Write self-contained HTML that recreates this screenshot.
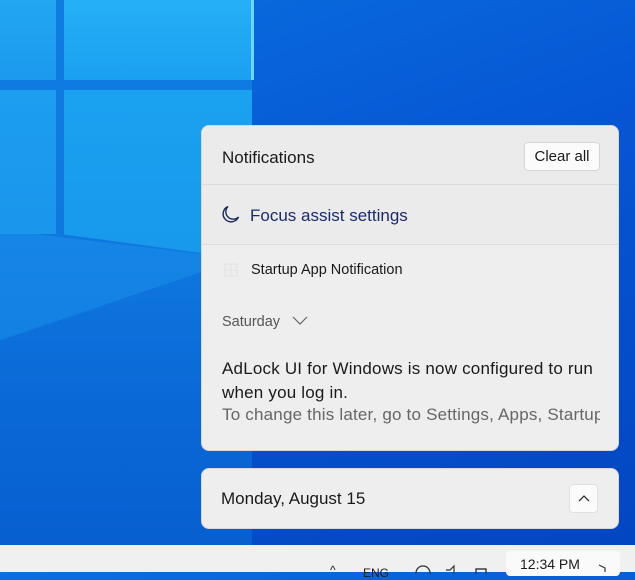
<!DOCTYPE html>
<html><head><style>
*{margin:0;padding:0;box-sizing:border-box}
body{width:635px;height:572px;overflow:hidden;position:relative;font-family:"Liberation Sans",sans-serif;background:linear-gradient(160deg,#0a6fe0 0%,#0657d4 40%,#0345c0 100%)}
.pane{position:absolute}
.panel{position:absolute;left:201px;top:125px;width:418px;height:326px;background:#eeeeee;border-radius:8px;overflow:hidden;border:1px solid #d8d8d8}
.t{position:absolute;white-space:nowrap;color:#1a1a1a}
</style></head><body>
<div class="pane" style="left:0;top:0;width:252px;height:545px;background:linear-gradient(180deg,#0f7ce2 0%,#0f78e0 45%,#0a68d6 75%,#075fd0 100%)"></div>
<div class="pane" style="left:0;top:230px;width:201px;height:120px;background:linear-gradient(180deg,#1686e6,#1280e2);clip-path:polygon(0 0,100% 20%,100% 35%,0 92%)"></div>
<div class="pane" style="left:0;top:0;width:56px;height:80px;background:linear-gradient(180deg,#22a7f2,#1c9aee)"></div>
<div class="pane" style="left:64px;top:0;width:188px;height:80px;background:linear-gradient(180deg,#25b0f6,#1aa0f0)"></div>
<div class="pane" style="left:251px;top:0;width:3px;height:80px;background:#6fd4ff"></div>
<div class="pane" style="left:0;top:90px;width:56px;height:144px;background:linear-gradient(180deg,#1d9eef,#1a96ec)"></div>
<div class="pane" style="left:64px;top:90px;width:188px;height:170px;background:linear-gradient(180deg,#1aa2f0,#1898ec);clip-path:polygon(0 0,100% 0,100% 100%,0 85%)"></div>

<div class="panel">
 <div style="position:absolute;left:0;top:0;width:100%;height:59px;background:#ebebeb;border-bottom:1px solid #dcdcdc"></div>
 <div class="t" style="left:20px;top:22px;font-size:17px">Notifications</div>
 <div style="position:absolute;left:322px;top:16px;width:76px;height:29px;background:#fbfbfb;border:1px solid #d6d6d6;border-radius:4px;font-size:15px;text-align:center;line-height:27px;color:#1a1a1a">Clear all</div>
 <div style="position:absolute;left:0;top:59px;width:100%;height:60px;background:#ebebeb;border-bottom:1px solid #dcdcdc"></div>
 <svg style="position:absolute;left:20px;top:79px" width="18" height="18" viewBox="0 0 18 18"><path d="M6 1.5 A8 8 0 1 0 16.5 12 A7 7 0 0 1 6 1.5Z" fill="none" stroke="#1b2a55" stroke-width="1.4"/></svg>
 <div class="t" style="left:48px;top:80px;font-size:17px;color:#1b2a6b">Focus assist settings</div>
 <svg style="position:absolute;left:22px;top:137px" width="14" height="14"><rect x="1" y="1" width="12" height="12" fill="none" stroke="#e2e2e2"/><path d="M1 7H13M7 1V13" stroke="#e2e2e2"/></svg>
 <div class="t" style="left:49px;top:136px;font-size:14.5px">Startup App Notification</div>
 <div class="t" style="left:20px;top:188px;font-size:14.5px;color:#555">Saturday</div>
 <svg style="position:absolute;left:90px;top:190px" width="16" height="10"><path d="M1 1L8 8L15 1" fill="none" stroke="#666" stroke-width="1.2"/></svg>
 <div class="t" style="left:20px;top:231px;font-size:17px;line-height:24px;letter-spacing:0.2px">AdLock UI for Windows is now configured to run<br>when you log in.</div>
 <div class="t" style="left:20px;top:279px;font-size:17px;color:#666;width:378px;overflow:hidden;letter-spacing:0.2px">To change this later, go to Settings, Apps, Startup</div>
</div>

<div style="position:absolute;left:201px;top:468px;width:418px;height:61px;background:#eeeeee;border-radius:8px;border:1px solid #d8d8d8"></div>
<div class="t" style="left:221px;top:489px;font-size:17px">Monday, August 15</div>
<div style="position:absolute;left:569px;top:484px;width:29px;height:29px;background:#fbfbfb;border:1px solid #e0e0e0;border-radius:4px"></div>
<svg style="position:absolute;left:578px;top:495px" width="12" height="8"><path d="M1 6L6 1L11 6" fill="none" stroke="#333" stroke-width="1.3"/></svg>

<div style="position:absolute;left:0;top:545px;width:635px;height:27px;background:#f0f0f0"></div>
<div style="position:absolute;left:506px;top:551px;width:114px;height:25px;background:#fafafa;border-radius:4px"></div>
<div class="t" style="left:520px;top:556px;font-size:14px">12:34 PM</div>
<div class="t" style="left:363px;top:566px;font-size:12px">ENG</div>
<div class="t" style="left:330px;top:563px;font-size:12px">^</div>
<svg style="position:absolute;left:414px;top:564px" width="80" height="10"><circle cx="9" cy="9" r="7" fill="none" stroke="#333" stroke-width="1.3"/><path d="M32 6h4l4-4v10" fill="none" stroke="#333" stroke-width="1.2"/><rect x="62" y="5" width="10" height="8" fill="none" stroke="#333" stroke-width="1.4"/></svg>
<svg style="position:absolute;left:598px;top:564px" width="10" height="8"><path d="M1 1L7 4V8" fill="none" stroke="#333" stroke-width="1.2"/></svg>
</body></html>
